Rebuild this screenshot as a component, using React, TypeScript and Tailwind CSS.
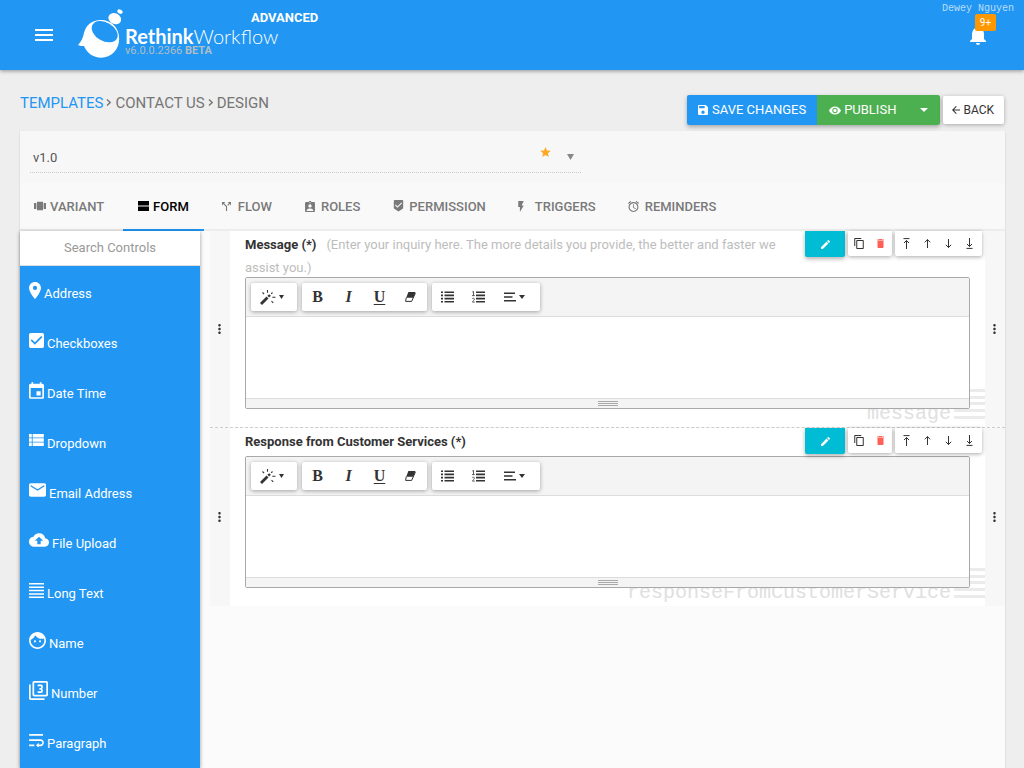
import type { ReactNode } from 'react';
import type { IconType } from 'react-icons';
import {
  MdAlarm,
  MdArrowBack,
  MdAssignmentInd,
  MdBeenhere,
  MdCallSplit,
  MdCheckBox,
  MdCloudUpload,
  MdContentCopy,
  MdDelete,
  MdEdit,
  MdEmail,
  MdEvent,
  MdFace,
  MdFilter3,
  MdFlashOn,
  MdMenu,
  MdMoreVert,
  MdNotifications,
  MdPlace,
  MdRemoveRedEye,
  MdSave,
  MdStar,
  MdViewCarousel,
  MdViewList,
  MdWrapText,
} from 'react-icons/md';

interface IconItem {
  label: string;
  icon: IconType;
  viewBox: string;
  size: string;
}

interface DrawnIconProps {
  className?: string;
  viewBox?: string;
}

function LinesIcon({ className, viewBox }: DrawnIconProps) {
  return (
    <svg className={className} viewBox={viewBox} fill="currentColor" preserveAspectRatio="none">
      <path d="M0 0h31v3H0zM0 7h31v3H0zM0 13h31v3H0zM0 20h31v3H0zM0 27h31v3H0z" />
    </svg>
  );
}

function TextLinesIcon({ className, viewBox }: DrawnIconProps) {
  return (
    <svg className={className} viewBox={viewBox} fill="none" stroke="currentColor" strokeWidth="1.500">
      <path d="M0 .8h15M0 4.200h15M0 7.500h15M0 10.900h15M0 14.200h15" />
    </svg>
  );
}

function StreamIcon({ className, viewBox }: DrawnIconProps) {
  return (
    <svg className={className} viewBox={viewBox} fill="currentColor">
      <path d="M0 0h11v4.500H0zM0 5.500h11V10H0z" />
    </svg>
  );
}

const tabs: IconItem[] = [
  { label: 'Variant', icon: MdViewCarousel, viewBox: '2 4 20 16', size: 'w-3 h-[10px]' },
  { label: 'Form', icon: StreamIcon as IconType, viewBox: '0 0 11 10', size: 'w-[11px] h-[10px]' },
  { label: 'Flow', icon: MdCallSplit, viewBox: '4 4 16 16', size: 'w-[9px] h-[9px] mr-0.5' },
  { label: 'Roles', icon: MdAssignmentInd, viewBox: '3 1 18 20', size: 'w-[10px] h-[11px] mr-0.5' },
  { label: 'Permission', icon: MdBeenhere, viewBox: '3 1 18 23', size: 'w-[11px] h-3 mr-0.5' },
  { label: 'Triggers', icon: MdFlashOn, viewBox: '7 2 10 20', size: 'w-[6px] h-[11px] mr-2' },
  { label: 'Reminders', icon: MdAlarm, viewBox: '2 2 20 20', size: 'w-[11px] h-[11px] mr-0.5' },
];

const controls: IconItem[] = [
  { label: 'Address', icon: MdPlace, viewBox: '5 2 14 20', size: 'w-3 h-[17px]' },
  { label: 'Checkboxes', icon: MdCheckBox, viewBox: '3 3 18 18', size: 'w-[15px] h-[15px]' },
  { label: 'Date Time', icon: MdEvent, viewBox: '3 1 18 20', size: 'w-[15px] h-[17px]' },
  { label: 'Dropdown', icon: MdViewList, viewBox: '4 5 17 14', size: 'w-[15px] h-3' },
  { label: 'Email Address', icon: MdEmail, viewBox: '2 4 20 16', size: 'w-[17px] h-[14px]' },
  { label: 'File Upload', icon: MdCloudUpload, viewBox: '0 4 24 16', size: 'w-5 h-[14px]' },
  { label: 'Long Text', icon: TextLinesIcon as IconType, viewBox: '0 0 15 15', size: 'w-[15px] h-[15px]' },
  { label: 'Name', icon: MdFace, viewBox: '2 2 20 20', size: 'w-[17px] h-[17px]' },
  { label: 'Number', icon: MdFilter3, viewBox: '1 1 22 22', size: 'w-[19px] h-[19px]' },
  { label: 'Paragraph', icon: MdWrapText, viewBox: '4 5 17 15', size: 'w-[15px] h-[13px]' },
];

function Logo() {
  return (
    <svg className="w-[46px] h-[50px] shrink-0" viewBox="78 9 46 50">
      <path
        d="M101 20c-9 0-15 5-17 13-1 5-3 9-6 12 2 1 4 1 6 1 3 7 9 11.700 17 11.700 10.500 0 18.200-8.500 18.200-19C119.200 28 111.500 20 101 20z"
        fill="#fff"
      />
      <ellipse cx="104.700" cy="31.700" rx="14" ry="9.300" transform="rotate(30 104.700 31.700)" fill="#2196f3" />
      <ellipse cx="114.800" cy="18.600" rx="6.600" ry="5.300" transform="rotate(25 114.800 18.600)" fill="#fff" />
      <ellipse cx="120" cy="11.600" rx="2.800" ry="2" transform="rotate(25 120 11.600)" fill="#fff" />
    </svg>
  );
}

function Header() {
  return (
    <header className="relative z-10 flex h-[70px] items-start justify-between bg-[#2196f3] text-white shadow-[0_1px_4px_rgba(0,0,0,0.4)]">
      <div className="flex">
        <button type="button" aria-label="Menu" className="mt-[29px] ml-[35px] h-3">
          <MdMenu viewBox="3 6 18 12" className="h-3 w-[18px]" />
        </button>
        <a href="#home" className="mt-[9px] ml-[25px] flex">
          <Logo />
          <span className="ml-px flex flex-col">
            <span className="-mr-10 self-end text-[13px] leading-[18px] font-bold">ADVANCED</span>
            <span className="font-[Lato] text-[20px] leading-[18px]">
              <b>Rethink</b>
              <span className="font-light">Workflow</span>
            </span>
            <span className="text-[11px] leading-3 text-[#b0bec5]">
              v6.0.0.2366 <b>BETA</b>
            </span>
          </span>
        </a>
      </div>
      <div className="flex flex-col items-end pt-[3px] pr-[10px]">
        <span className="font-[Courier,'Liberation_Mono',monospace] text-[10px] leading-[11px] text-[#bbdefb]">Dewey Nguyen</span>
        <button type="button" aria-label="Notifications" className="relative mt-[11px] mr-[27px]">
          <MdNotifications viewBox="4 2 16 20" className="h-[20px] w-[18px]" />
          <span className="absolute -top-[11px] left-1.5 h-[17px] w-[21px] rounded-xs bg-[#ff9800] text-center text-[10px] leading-[17px]">9+</span>
        </button>
      </div>
    </header>
  );
}

function ChevronIcon() {
  return (
    <svg className="mx-[3px] inline h-[7px] w-[6px] align-[2px]" viewBox="0 0 6 7" fill="none" stroke="currentColor" strokeWidth="1.400">
      <path d="M1 .5l3.200 3L1 6.500" />
    </svg>
  );
}

function CaretIcon({ className }: { className: string }) {
  return (
    <svg className={className} viewBox="0 0 8 5" preserveAspectRatio="none" fill="currentColor">
      <path d="M0 0h8L4 5z" />
    </svg>
  );
}

function PageBar() {
  return (
    <div className="flex h-[61px] items-start justify-between pt-[23px]">
      <nav aria-label="Breadcrumb" className="text-[15px] leading-5 text-[#757575]">
        <a href="#templates" className="text-[#2196f3]">TEMPLATES</a>
        <ChevronIcon />
        CONTACT US
        <ChevronIcon />
        DESIGN
      </nav>
      <div className="flex items-center gap-[3px] pt-[2px] pr-px">
        <div className="flex h-[30px] rounded-xs text-[13px] text-white shadow-[0_2px_4px_rgba(0,0,0,0.3)]">
          <button type="button" className="flex items-center gap-1 rounded-l-xs bg-[#2196f3] px-[11px]">
            <MdSave viewBox="3 3 18 18" className="size-[10px]" />
            SAVE CHANGES
          </button>
          <button type="button" className="flex items-center gap-[3px] bg-[#4caf50] px-3">
            <MdRemoveRedEye viewBox="1 4 22 16" className="h-[9px] w-3" />
            PUBLISH
          </button>
          <button type="button" aria-label="More publish options" className="flex w-8 items-center justify-center rounded-r-xs bg-[#4caf50]">
            <CaretIcon className="h-1 w-2" />
          </button>
        </div>
        <button type="button" className="flex h-7 items-center gap-[3px] rounded-xs bg-white pr-[10px] pl-[9px] text-[12px] text-[#333] shadow-[0_1px_4px_rgba(0,0,0,0.3)]">
          <MdArrowBack viewBox="4 4 16 16" className="size-2" />
          BACK
        </button>
      </div>
    </div>
  );
}

function VersionPicker() {
  return (
    <div className="h-[52px] bg-[#f7f7f7] pt-3">
      <div className="w-7/12 pr-[14px] pl-[10px]">
        <button type="button" className="flex h-[30px] w-full items-center border-b border-dotted border-[#ccc] pr-[7px] pl-[3px] text-[13px] text-[#555]">
          v1.0
          <MdStar viewBox="2 2 20 19" className="mr-4 mb-3 ml-auto h-[10px] w-[11px] text-[#ffa726]" />
          <CaretIcon className="mb-0.5 h-[6px] w-[7px] text-[#888]" />
        </button>
      </div>
    </div>
  );
}

function Tabs({ active }: { active: string }) {
  return (
    <div role="tablist" className="flex h-12 gap-1 border-b-2 border-[#ededed] bg-[#f9f9f9]">
      {tabs.map(({ label, icon: Icon, viewBox, size }) => (
        <button
          key={label}
          type="button"
          role="tab"
          aria-selected={label === active}
          className={`-mb-0.5 flex items-center border-b-2 pt-0.5 pr-[15px] pl-[14px] text-[13px] font-medium uppercase ${
            label === active ? 'border-[#2196f3] text-black' : 'border-transparent text-[#7a7a7a]'
          }`}
        >
          <span className="mr-1 mb-0.5 flex w-3 justify-center">
            <Icon viewBox={viewBox} className={`shrink-0 ${size}`} />
          </span>
          {label}
        </button>
      ))}
    </div>
  );
}

function Sidebar() {
  return (
    <aside className="relative w-[180px] shrink-0 bg-[#2196f3] shadow-[0_1px_4px_rgba(0,0,0,0.4)]">
      <input
        type="text"
        aria-label="Search Controls"
        placeholder="Search Controls"
        className="mb-0.5 block h-[35px] w-full border-b border-[#ddd] bg-white pb-0.5 text-center text-[13px] outline-none placeholder:text-[#999]"
      />
      {controls.map(({ label, icon: Icon, viewBox, size }) => (
        <button key={label} type="button" className="flex h-[50px] w-full items-center gap-[3px] pt-0.5 pl-[9px] text-[13px] text-white">
          <Icon viewBox={viewBox} className={`mb-2 shrink-0 ${size}`} />
          {label}
        </button>
      ))}
    </aside>
  );
}

function MoveIcon({ d }: { d: string }) {
  return (
    <svg className="h-[11px] w-[7px]" viewBox="0 0 7 11" fill="none" stroke="currentColor">
      <path d={d} />
    </svg>
  );
}

const moves = [
  { label: 'Move to top', d: 'M.5 .6h6M3.500 11V2.500M1 5l2.500-2.500L6 5' },
  { label: 'Move up', d: 'M3.500 10V1.500M.8 4.300l2.700-2.700 2.700 2.700' },
  { label: 'Move down', d: 'M3.500 1v8.500M.8 6.800l2.700 2.700 2.700-2.700' },
  { label: 'Move to bottom', d: 'M.5 10.400h6M3.500 0v8.500M1 6l2.500 2.500L6 6' },
];

function FieldActions() {
  return (
    <div className="-mr-3 flex shrink-0 items-start gap-[3px] self-start text-[#333]">
      <button type="button" aria-label="Edit" className="flex h-[26px] w-10 items-center justify-center rounded-b-xs bg-[#00bcd4] text-white shadow-[0_2px_4px_rgba(0,0,0,0.3)]">
        <MdEdit viewBox="3 3 18 18" className="size-[9px]" />
      </button>
      <div className="flex h-[25px] rounded-b-xs bg-white shadow-[0_1px_4px_rgba(0,0,0,0.35)]">
        <button type="button" aria-label="Copy" className="flex w-[22px] items-center justify-center">
          <MdContentCopy viewBox="2 1 19 22" className="h-[11px] w-[10px]" />
        </button>
        <button type="button" aria-label="Delete" className="flex w-[22px] items-center justify-center pr-px text-[#ff5f57]">
          <MdDelete viewBox="5 3 14 18" className="h-[9px] w-[7px]" />
        </button>
      </div>
      <div className="flex h-[25px] rounded-b-xs bg-white pr-0.5 pl-px shadow-[0_1px_4px_rgba(0,0,0,0.35)]">
        {moves.map((m) => (
          <button key={m.label} type="button" aria-label={m.label} className="flex w-[21px] items-center justify-center">
            <MoveIcon d={m.d} />
          </button>
        ))}
      </div>
    </div>
  );
}

function ToolGroup({ children }: { children: ReactNode }) {
  return <div className="flex h-7 rounded-xs bg-white pr-px shadow-[0_1px_4px_rgba(0,0,0,0.35)]">{children}</div>;
}

function Tool({ label, wide, children }: { label: string; wide?: boolean; children: ReactNode }) {
  return (
    <button type="button" aria-label={label} className={`flex items-center justify-center ${wide ? 'w-[45px] gap-[3px] pr-1' : 'w-[31px]'}`}>
      {children}
    </button>
  );
}

function EditorToolbar() {
  return (
    <div className="flex h-[39px] gap-[5px] border-b border-[#ddd] bg-[#f4f4f4] p-[5px] font-['Liberation_Serif',serif] text-[16px] text-[#333]">
      <ToolGroup>
        <Tool label="Style" wide>
          <svg className="h-[15px] w-4" viewBox="0 0 16 15" fill="none" stroke="currentColor">
            <path d="M1 14L7.500 7.500" strokeWidth="2.800" />
            <path d="M8.300 6.700L10 5" strokeWidth="2.400" />
            <path d="M2.500 2.500l1.600 1.600M7.500 0v2.700M12.500 2.500l-1.300 1.300M12.300 7.300H15.500M11.500 11.200l1.700 1.700" strokeWidth="1.100" />
          </svg>
          <CaretIcon className="h-[4px] w-[5px]" />
        </Tool>
      </ToolGroup>
      <ToolGroup>
        <Tool label="Bold"><b>B</b></Tool>
        <Tool label="Italic"><b><i>I</i></b></Tool>
        <Tool label="Underline"><b className="underline underline-offset-2">U</b></Tool>
        <Tool label="Remove formatting">
          <svg className="h-[10px] w-[11px]" viewBox="0 0 11 10">
            <path d="M3.400 0h7.100L8.300 5.800H1.200z" fill="currentColor" />
            <path d="M1.300 5.500L.6 9.400h6L10.400 1.200" fill="none" stroke="currentColor" />
          </svg>
        </Tool>
      </ToolGroup>
      <ToolGroup>
        <Tool label="Bulleted list">
          <svg className="h-3 w-[13px]" viewBox="0 0 13 12" fill="none" stroke="currentColor" strokeWidth="1.600">
            <path d="M0 1.200h2M0 4.400h2M0 7.600h2M0 10.800h2M3.500 1.200H13M3.500 4.400H13M3.500 7.600H13M3.500 10.800H13" />
          </svg>
        </Tool>
        <Tool label="Numbered list">
          <svg className="h-3 w-[13px]" viewBox="0 0 13 12" fill="none" stroke="currentColor" strokeWidth="1.600">
            <path d="M4 1.200H13M4 4.400H13M4 7.600H13M4 10.800H13" />
            <path d="M.3 1l1.200-.6v4M0 4.600h2.800M.2 7.800c.4-.9 2.200-.8 2.200.3 0 .9-1.400 1.800-2 3h2.400" strokeWidth=".8" />
          </svg>
        </Tool>
        <Tool label="Align" wide>
          <svg className="h-[10px] w-3" viewBox="0 0 12 10" fill="none" stroke="currentColor" strokeWidth="1.600">
            <path d="M0 1.200h11M0 5h8.500M0 8.800h12" />
          </svg>
          <CaretIcon className="h-[4px] w-[6px]" />
        </Tool>
      </ToolGroup>
    </div>
  );
}

function Grip() {
  return (
    <div className="flex w-5 shrink-0 items-center justify-center bg-[#f7f7f7] pr-px text-[#333]">
      <MdMoreVert viewBox="10 4 4 16" className="h-[10px] w-[3px]" />
    </div>
  );
}

interface FieldProps {
  id: string;
  label: string;
  hint?: string;
}

function Field({ id, label, hint }: FieldProps) {
  return (
    <div className="flex border-b border-dashed border-[#ccc] last:border-b-0">
      <Grip />
      <div className="relative isolate min-w-0 flex-1 bg-white px-[15px] pb-[18px]">
        <div className="-mb-0.5 flex min-h-[30px] justify-between gap-2">
          <label htmlFor={id} className="pt-0.5 text-[13px] leading-[23px] text-[#bdbdbd]">
            <b className="mr-[10px] text-[#333]">{`${label} (*)`}</b>
            {hint}
          </label>
          <FieldActions />
        </div>
        <div className="rounded-xs border border-[#a9a9a9] bg-white">
          <EditorToolbar />
          <textarea id={id} className="block h-[81px] w-full resize-none p-2 text-[13px] outline-none" />
          <div className="flex h-[10px] flex-col items-center justify-center gap-px border-t border-[#ddd] bg-[#f4f4f4]">
            <span className="h-px w-5 bg-[#a9a9a9]" />
            <span className="h-px w-5 bg-[#a9a9a9]" />
            <span className="h-px w-5 bg-[#a9a9a9]" />
          </div>
        </div>
        <div className="absolute right-0 bottom-2 -z-10 flex items-end gap-[3px] font-[Courier,'Liberation_Mono',monospace] text-[20px] leading-[10px] text-[#e0e0e0]">
          <span>{id}</span>
          <LinesIcon viewBox="0 0 31 30" className="h-[30px] w-[31px] text-[#ebebeb]" />
        </div>
      </div>
      <Grip />
    </div>
  );
}

export default function App() {
  return (
    <div className="min-h-screen bg-[#eee] font-[Roboto,sans-serif]">
      <Header />
      <div className="pr-[19px] pl-5">
        <PageBar />
        <main className="bg-[#fbfbfb] shadow-[0_1px_2px_rgba(0,0,0,0.15)]">
          <VersionPicker />
          <Tabs active="Form" />
          <div className="flex">
            <Sidebar />
            <div className="ml-[10px] min-w-0 flex-1">
              <Field
                id="message"
                label="Message"
                hint="(Enter your inquiry here. The more details you provide, the better and faster we assist you.)"
              />
              <Field id="responseFromCustomerService" label="Response from Customer Services" />
            </div>
          </div>
        </main>
      </div>
    </div>
  );
}
